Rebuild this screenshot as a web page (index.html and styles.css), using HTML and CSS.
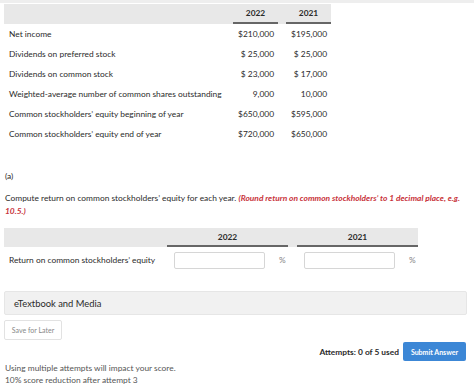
FILE: index.html
```html
<!DOCTYPE html>
<html lang="en">
<head>
  <meta charset="UTF-8" />
  <title>Return on Common Stockholders' Equity</title>
  <link rel="stylesheet" href="styles.css">
</head>
<body>
  <div class="topbar"></div>

  <div class="data-table">
    <div class="row head">
      <div></div>
      <div class="th">2022</div>
      <div class="th">2021</div>
    </div>
    <div class="row">
      <div class="label">Net income</div>
      <div class="num">$210,000</div>
      <div class="num">$195,000</div>
    </div>
    <div class="row">
      <div class="label">Dividends on preferred stock</div>
      <div class="num">$ 25,000</div>
      <div class="num">$ 25,000</div>
    </div>
    <div class="row">
      <div class="label">Dividends on common stock</div>
      <div class="num">$ 23,000</div>
      <div class="num">$ 17,000</div>
    </div>
    <div class="row">
      <div class="label">Weighted-average number of common shares outstanding</div>
      <div class="num">9,000</div>
      <div class="num">10,000</div>
    </div>
    <div class="row">
      <div class="label">Common stockholders’ equity beginning of year</div>
      <div class="num">$650,000</div>
      <div class="num">$595,000</div>
    </div>
    <div class="row">
      <div class="label">Common stockholders’ equity end of year</div>
      <div class="num">$720,000</div>
      <div class="num">$650,000</div>
    </div>
  </div>

  <p class="part">(a)</p>
  <p class="question">Compute return on common stockholders’ equity for each year. <em class="hint">(Round return on common stockholders’ to 1 decimal place, e.g. 10.5.)</em></p>

  <div class="answer-table">
    <div class="row head">
      <div></div>
      <div class="th">2022</div>
      <div class="th">2021</div>
    </div>
    <div class="row">
      <div class="label">Return on common stockholders’ equity</div>
      <div class="cell"><input type="text" class="answer"><span class="unit">%</span></div>
      <div class="cell"><input type="text" class="answer"><span class="unit">%</span></div>
    </div>
  </div>

  <div class="media">eTextbook and Media</div>
  <button class="save-btn">Save for Later</button>

  <div class="submit-row">
    <span class="attempts">Attempts: 0 of 5 used</span>
    <button class="submit-btn">Submit Answer</button>
  </div>

  <p class="note">Using multiple attempts will impact your score.<br>10% score reduction after attempt 3</p>
</body>
</html>
```

FILE: styles.css
```css
body { font-family: Lato, "Open Sans", sans-serif; margin: 0; padding: 0; background: #fff; color: #2a2a2a; font-size: 8.4px; }
.topbar { height: 3px; background: #eeeeee; }

.data-table { margin: 1px 0 0 4px; width: 327px; }
.data-table .row { display: grid; grid-template-columns: 221px 45px 45px; column-gap: 8px; height: 20px; align-items: center; }
.row.head { background: #e8e8e8; align-items: stretch; }
.th {
  text-align: center; font-weight: bold; color: #2a2a2a; border-bottom: 2px solid #666;
  display: flex; align-items: center; justify-content: center;
}
.label { padding-left: 5px; white-space: nowrap; }
.num { text-align: right; padding-right: 4px; }

.part { margin: 26px 0 0 5px; line-height: 12px; }
.question { margin: 10px 8px 0 5px; line-height: 12.5px; }
.hint { color: #c8323a; font-weight: bold; }

.answer-table { margin: 11px 0 0 4px; width: 414px; }
.answer-table .row { display: grid; grid-template-columns: 154px 121px 121px; column-gap: 9px; align-items: center; }
.answer-table .row.head { height: 19px; align-items: stretch; }
.answer-table .row:not(.head) { height: 26px; }
.cell { display: flex; align-items: center; padding-left: 7px; }
.answer { width: 91px; height: 17px; box-sizing: border-box; border: 1px solid #d6d6d6; border-radius: 2px; padding: 0; margin: 0; }
.unit { margin-left: 14px; color: #888; }

.media {
  margin: 18px 7px 0 4px; height: 24px; box-sizing: border-box; background: #f1f1f1;
  border: 1px solid #e6e6e6; border-radius: 2px; padding-left: 9px; font-size: 9.4px;
  display: flex; align-items: center;
}
.save-btn {
  display: block; margin: 5px 0 0 4px; width: 58px; height: 20px; background: #fff;
  border: 1px solid #e2e2e2; border-radius: 2px; font-family: inherit; font-size: 7px; color: #888; padding: 0;
}
.submit-row { display: flex; justify-content: flex-end; align-items: center; gap: 4px; margin: 2px 8px 0 0; }
.attempts { font-weight: bold; }
.submit-btn {
  width: 63px; height: 19px; background: #3c87d6; color: #fff; border: none; border-radius: 2px;
  font-family: inherit; font-size: 7px; font-weight: bold; padding: 0;
}
.note { margin: 1px 0 0 5px; line-height: 12px; color: #555; }
```
